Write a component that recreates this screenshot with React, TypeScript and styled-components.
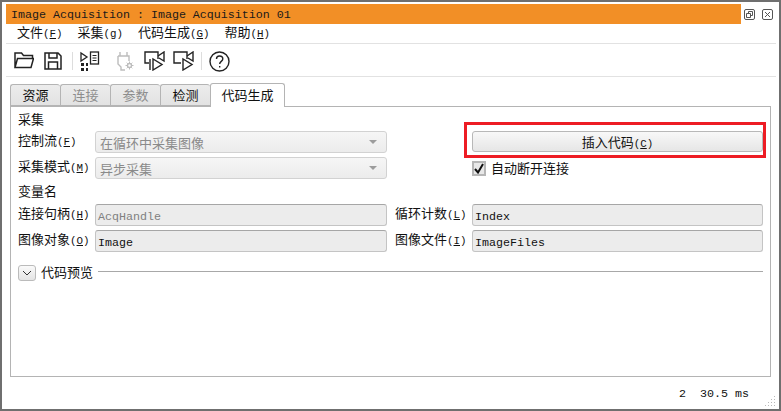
import React from 'react';
import styled, { createGlobalStyle } from 'styled-components';

const GlobalStyle = createGlobalStyle`
  html, body {
    margin: 0;
    padding: 0;
    background: #ffffff;
  }
  body {
    font-family: "Liberation Mono", "Noto Sans CJK SC", monospace;
    font-size: 13px;
    color: #111111;
  }
`;

const Window = styled.div`
  box-sizing: border-box;
  width: 781px;
  height: 411px;
  border: 2px solid #6f6f6f;
  background: #ffffff;
  display: flex;
  flex-direction: column;
  overflow: hidden;
`;

const TitleRow = styled.div`
  display: flex;
  align-items: center;
  margin: 2px 0 0 4px;
  height: 20px;
`;

const TitleBar = styled.div`
  width: 735px;
  height: 20px;
  line-height: 22px;
  background: #f28f26;
  padding-left: 5px;
  box-sizing: border-box;
  font-size: 11.67px;
  color: #1a1a1a;
  white-space: pre;
`;

const WindowButton = styled.button`
  width: 11px;
  height: 11px;
  padding: 0;
  margin-left: 3px;
  margin-right: 4px;
  border: none;
  background: none;
  display: flex;
  color: #555555;
`;

const MenuBar = styled.div`
  display: flex;
  height: 19px;
  margin: 0 3px 0 4px;
  padding-left: 11px;
  gap: 15px;
  align-items: center;
  border-bottom: 1px solid #e2e2e2;
`;

const MenuItem = styled.span`
  font-size: 13px;
  line-height: 21px;
  white-space: nowrap;
`;

const AccelText = styled.span`
  font-size: 10.83px;
`;

const AccelKey = styled.span`
  text-decoration: underline;
`;

const Accel: React.FC<{ k: string }> = ({ k }) => (
  <AccelText>
    (<AccelKey>{k}</AccelKey>)
  </AccelText>
);

const Toolbar = styled.div`
  display: flex;
  align-items: center;
  height: 30px;
  margin: 0 3px 0 4px;
  padding: 2px 0 0 8px;
  border-bottom: 1px solid #e2e2e2;
`;

const ToolIcon = styled.svg<{ $gap: number }>`
  display: block;
  flex: none;
  margin-right: ${(p) => p.$gap}px;
`;

const ToolSep = styled.div<{ $gap: number }>`
  width: 1px;
  height: 18px;
  background: #dddddd;
  margin-right: ${(p) => p.$gap}px;
  flex: none;
`;

const TabStrip = styled.div`
  display: flex;
  align-items: flex-end;
  margin: 6px 0 0 8px;
  height: 23px;
  position: relative;
  z-index: 1;
`;

const Tab = styled.div<{ $active?: boolean; $disabled?: boolean }>`
  box-sizing: border-box;
  width: ${(p) => (p.$active ? 75 : 50)}px;
  height: ${(p) => (p.$active ? 24 : 22)}px;
  margin-bottom: ${(p) => (p.$active ? -1 : 0)}px;
  background: ${(p) => (p.$active ? '#ffffff' : 'linear-gradient(#ececec, #e2e2e2)')};
  border: 1px solid #b4b4b4;
  border-right-width: ${(p) => (p.$active ? 1 : 0)}px;
  border-bottom-width: ${(p) => (p.$active ? 0 : 1)}px;
  border-radius: 3px 3px 0 0;
  text-align: center;
  line-height: ${(p) => (p.$active ? 25 : 23)}px;
  font-size: 13px;
  color: ${(p) => (p.$disabled ? '#8d8d8d' : '#111111')};
`;

const Panel = styled.div`
  box-sizing: border-box;
  width: 761px;
  height: 271px;
  margin-left: 8px;
  border: 1px solid #b4b4b4;
  padding: 4px 0 0 7px;
`;

const FormGrid = styled.div`
  display: grid;
  grid-template-columns: 77px 292px 85px 291px;
  grid-template-rows: 16px 22px 22px 17px 22px 22px;
  row-gap: 4px;
  align-items: center;
`;

const SectionTitle = styled.div`
  grid-column: 1 / 3;
  align-self: start;
  padding-top: 2px;
  font-size: 13px;
  line-height: 16px;
`;

const FieldLabel = styled.label<{ $right?: boolean }>`
  font-size: 13px;
  line-height: 24px;
  white-space: nowrap;
  padding-left: ${(p) => (p.$right ? 8 : 0)}px;
`;

const Combo = styled.div`
  box-sizing: border-box;
  height: 22px;
  display: flex;
  align-items: center;
  justify-content: space-between;
  padding: 0 9px 0 4px;
  border: 1px solid #d2d2d2;
  border-radius: 3px;
  background: linear-gradient(#f6f6f6, #ececec);
  color: #8a8a8a;
  font-size: 13px;
`;

const ComboArrow = styled.span`
  width: 0;
  height: 0;
  border-left: 4px solid transparent;
  border-right: 4px solid transparent;
  border-top: 4px solid #9c9c9c;
`;

const TextField = styled.div<{ $muted?: boolean }>`
  box-sizing: border-box;
  height: 22px;
  line-height: 20px;
  padding: 2px 0 0 2px;
  border: 1px solid #c4c4c4;
  border-top-color: #a6a6a6;
  border-radius: 3px;
  background: #ececec;
  font-size: 11.67px;
  color: ${(p) => (p.$muted ? '#808080' : '#111111')};
`;

const ActionCell = styled.div`
  position: relative;
  height: 22px;
`;

const InsertButton = styled.button`
  box-sizing: border-box;
  display: block;
  width: 100%;
  height: 21px;
  padding: 0 0 3px;
  border: 1px solid #b8b8b8;
  border-radius: 3px;
  background: linear-gradient(#f8f8f8, #e6e6e6);
  font-family: inherit;
  font-size: 13px;
  color: #111111;
`;

const Highlight = styled.div`
  position: absolute;
  top: -9px;
  left: -8px;
  width: 302px;
  height: 36px;
  box-sizing: border-box;
  border: 3px solid #ed1c24;
  pointer-events: none;
`;

const CheckRow = styled.div`
  display: flex;
  align-items: center;
  gap: 5px;
  font-size: 13px;
`;

const CheckText = styled.span`
  padding-bottom: 2px;
`;

const CheckBox = styled.span`
  box-sizing: border-box;
  width: 14px;
  height: 15px;
  border: 2px solid #b6b6b6;
  background: #e8e8e8;
  display: flex;
  align-items: center;
  justify-content: center;
`;

const PreviewRow = styled.div`
  display: flex;
  align-items: center;
  margin-top: 13px;
  height: 16px;
  width: 745px;
`;

const ExpandButton = styled.button`
  box-sizing: border-box;
  width: 18px;
  height: 16px;
  padding: 0;
  border: 1px solid #bbbbbb;
  border-radius: 3px;
  background: linear-gradient(#fafafa, #e4e4e4);
  display: flex;
  align-items: center;
  justify-content: center;
  flex: none;
`;

const PreviewLabel = styled.span`
  margin: 0 5px;
  padding-bottom: 3px;
  font-size: 13px;
  flex: none;
`;

const PreviewLine = styled.div`
  flex: 1;
  height: 1px;
  margin-bottom: 3px;
  background: #a8a8a8;
`;

const StatusBar = styled.div`
  flex: 1;
  display: flex;
  align-items: center;
  justify-content: flex-end;
  position: relative;
  padding: 2px 30px 0 0;
  font-size: 11.67px;
  white-space: pre;
`;

const Grip = styled.svg`
  position: absolute;
  right: 3px;
  bottom: 3px;
`;

const STROKE = '#222222';

const App: React.FC = () => (
  <Window>
    <GlobalStyle />
    <TitleRow>
      <TitleBar>Image Acquisition : Image Acquisition 01</TitleBar>
      <WindowButton aria-label="restore">
        <svg width="11" height="11" viewBox="0 0 11 11" fill="none" stroke="currentColor">
          <rect x="0.5" y="0.5" width="10" height="10" rx="1.5" />
          <path d="M4.5 4V2.5H8.5V6.5H7M2.5 4.5H6.5V8.5H2.5Z" />
        </svg>
      </WindowButton>
      <WindowButton aria-label="close">
        <svg width="11" height="11" viewBox="0 0 11 11" fill="none" stroke="currentColor">
          <rect x="0.5" y="0.5" width="10" height="10" rx="1.5" />
          <path d="M3 3L8 8M8 3L3 8" />
        </svg>
      </WindowButton>
    </TitleRow>

    <MenuBar>
      <MenuItem>文件<Accel k="F" /></MenuItem>
      <MenuItem>采集<Accel k="g" /></MenuItem>
      <MenuItem>代码生成<Accel k="G" /></MenuItem>
      <MenuItem>帮助<Accel k="H" /></MenuItem>
    </MenuBar>

    <Toolbar>
      <ToolIcon $gap={10} width="20" height="20" viewBox="0 0 20 20" fill="none" stroke={STROKE} strokeWidth="1.5">
        <path d="M1 16.5V2H7.5L9.5 4.5H18.5V7.5M1 16.5H17L19.5 7.5H3.5L1 16.5Z" />
      </ToolIcon>
      <ToolIcon $gap={10} width="18" height="20" viewBox="0 0 18 20" fill="none" stroke={STROKE} strokeWidth="1.5">
        <path d="M1 2H14L17 5V18H1Z" />
        <path d="M5 2V7H13V2M4.5 18V11H13.5V18" />
      </ToolIcon>
      <ToolSep $gap={7} />
      <ToolIcon $gap={16} width="20" height="20" viewBox="0 0 20 20" fill="none" stroke={STROKE} strokeWidth="1.3">
        <path d="M1 2V10L7 6L1 2Z" />
        <rect x="10.5" y="1" width="8" height="12" />
        <path d="M12.5 4.5H16.5M12.5 7H16.5M12.5 9.5H16.5" strokeWidth="1" />
        <path d="M1 12H4V15H1ZM6 12H8V15H6ZM1 17H4V20H1ZM6 17H8V20H6Z" fill={STROKE} stroke="none" />
      </ToolIcon>
      <ToolIcon $gap={10} width="18" height="20" viewBox="0 0 18 20" fill="none" stroke="#bdbdbd" strokeWidth="1.4">
        <path d="M4 1V5M11 1V5M2 5H13V10M2 5V13L5 16V19H9" />
        <circle cx="13.5" cy="14.5" r="2" />
        <path d="M13.5 10.5V12M13.5 17V18.5M9.5 14.5H11M16 14.5H17.5M10.7 11.7L11.8 12.8M15.2 16.2L16.3 17.3M16.3 11.7L15.2 12.8M11.8 16.2L10.7 17.3" strokeWidth="1" />
      </ToolIcon>
      <ToolIcon $gap={8} width="21" height="20" viewBox="0 0 21 20" fill="none" stroke={STROKE} strokeWidth="1.4">
        <path d="M5 12H1V1H14V8" />
        <path d="M14 5L20 1V10L15 7" />
        <path d="M6 8V19M9 8V19L18 13.5L9 8Z" />
      </ToolIcon>
      <ToolIcon $gap={7} width="21" height="20" viewBox="0 0 21 20" fill="none" stroke={STROKE} strokeWidth="1.4">
        <path d="M8 12H1V1H14V8" />
        <path d="M14 5L20 1V10L15 7" />
        <path d="M10 8V19L19 13.5L10 8Z" />
      </ToolIcon>
      <ToolSep $gap={7} />
      <ToolIcon $gap={0} width="21" height="21" viewBox="0 0 21 21" fill="none" stroke={STROKE} strokeWidth="1.4">
        <circle cx="10.5" cy="10.5" r="9.5" />
        <path d="M7.5 8C7.5 6 9 5 10.5 5C12.5 5 13.8 6.3 13.8 8C13.8 10.3 10.7 10.5 10.7 13" />
        <path d="M10 15H11.4V16.6H10Z" fill={STROKE} stroke="none" />
      </ToolIcon>
    </Toolbar>

    <TabStrip>
      <Tab>资源</Tab>
      <Tab $disabled>连接</Tab>
      <Tab $disabled>参数</Tab>
      <Tab>检测</Tab>
      <Tab $active>代码生成</Tab>
    </TabStrip>

    <Panel>
      <FormGrid>
        <SectionTitle>采集</SectionTitle>
        <span />
        <span />

        <FieldLabel>控制流<Accel k="F" /></FieldLabel>
        <Combo>在循环中采集图像<ComboArrow /></Combo>
        <span />
        <ActionCell>
          <InsertButton>插入代码<Accel k="C" /></InsertButton>
          <Highlight />
        </ActionCell>

        <FieldLabel>采集模式<Accel k="M" /></FieldLabel>
        <Combo>异步采集<ComboArrow /></Combo>
        <span />
        <CheckRow>
          <CheckBox>
            <svg width="10" height="11" viewBox="0 0 10 11" fill="none" stroke="#111111" strokeWidth="2">
              <path d="M1 6L4 9.5L9 1" />
            </svg>
          </CheckBox>
          <CheckText>自动断开连接</CheckText>
        </CheckRow>

        <SectionTitle>变量名</SectionTitle>
        <span />
        <span />

        <FieldLabel>连接句柄<Accel k="H" /></FieldLabel>
        <TextField $muted>AcqHandle</TextField>
        <FieldLabel $right>循环计数<Accel k="L" /></FieldLabel>
        <TextField>Index</TextField>

        <FieldLabel>图像对象<Accel k="O" /></FieldLabel>
        <TextField>Image</TextField>
        <FieldLabel $right>图像文件<Accel k="I" /></FieldLabel>
        <TextField>ImageFiles</TextField>
      </FormGrid>

      <PreviewRow>
        <ExpandButton aria-label="expand">
          <svg width="10" height="6" viewBox="0 0 10 6" fill="none" stroke="#333333" strokeWidth="1">
            <path d="M1 1L5 5L9 1" />
          </svg>
        </ExpandButton>
        <PreviewLabel>代码预览</PreviewLabel>
        <PreviewLine />
      </PreviewRow>
    </Panel>

    <StatusBar>
      2  30.5 ms
      <Grip width="11" height="11" viewBox="0 0 11 11" fill="#b9b9b9">
        <path d="M9 1h1v1H9zM6 4h1v1H6zM9 4h1v1H9zM3 7h1v1H3zM6 7h1v1H6zM9 7h1v1H9zM0 10h1v1H0zM3 10h1v1H3zM6 10h1v1H6zM9 10h1v1H9z" />
      </Grip>
    </StatusBar>
  </Window>
);

export default App;
